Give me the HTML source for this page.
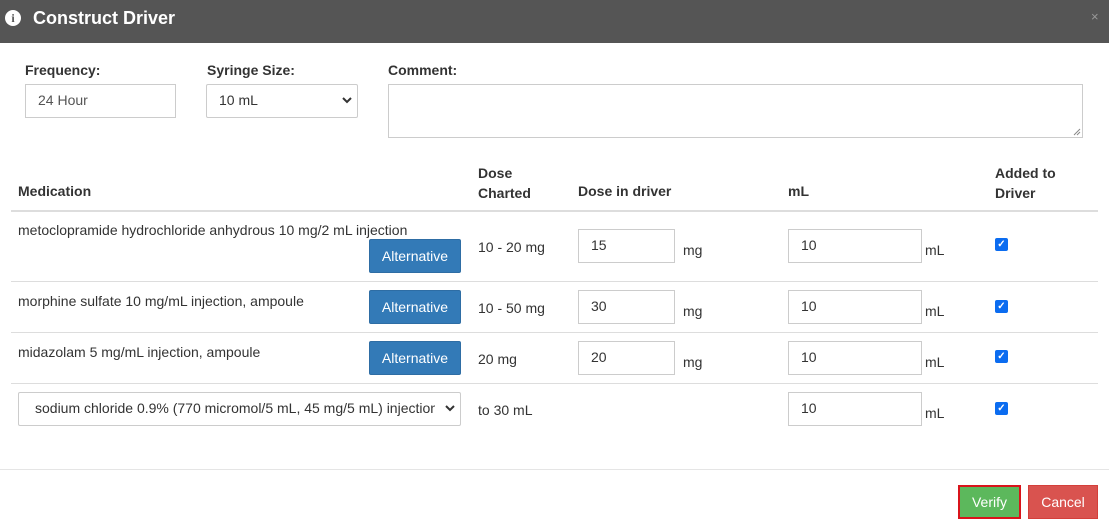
<!DOCTYPE html><html><head><style>
body{margin:0;width:1109px;height:528px;position:relative;font-family:"Liberation Sans",Arial,sans-serif;font-size:14px;color:#333;background:#fff;overflow:hidden}
.a{position:absolute}
.hd{left:0;top:0;width:1109px;height:43px;background:#555}
.b{font-weight:bold}
.inp{position:absolute;border:1px solid #ccc;box-sizing:border-box;background:#fff;padding-left:12px;line-height:30px;font-size:14px;color:#555}
.line{position:absolute;left:11px;width:1087px;height:1px;background:#ddd}
.btn{position:absolute;background:#337ab7;color:#fff;border:1px solid #2e6da4;box-sizing:border-box;text-align:center;line-height:32px;font-size:14px;border-radius:2px}
.cb{position:absolute;width:13px;height:13px;background:#0b6cf0;border-radius:2px;color:#fff;font-size:10px;line-height:13px;text-align:center;font-weight:bold}
.chev{position:absolute;right:5px;top:11px;background:#fff}
</style></head><body>
<div class="a hd"></div>
<div class="a" style="left:5px;top:10px;width:16px;height:16px;border-radius:50%;background:#fff;color:#555;font:bold 12px 'Liberation Serif',serif;text-align:center;line-height:16px">i</div>
<div class="a b" style="left:33px;top:8px;color:#fff;font-size:18px">Construct Driver</div>
<div class="a" style="left:1091px;top:9px;color:#999;font-size:13px">×</div>

<div class="a b" style="left:25px;top:62px">Frequency:</div>
<div class="a b" style="left:207px;top:62px">Syringe Size:</div>
<div class="a b" style="left:388px;top:62px">Comment:</div>
<div class="inp" style="left:25px;top:84px;width:151px;height:34px">24 Hour</div>
<div class="inp" style="left:206px;top:84px;width:152px;height:34px;color:#333;border-radius:2px">10 mL<svg class="chev" width="10" height="8" viewBox="0 0 10 8"><path d="M1 2L5 6L9 2" stroke="#333" stroke-width="2" fill="none"/></svg></div>
<div class="inp" style="left:388px;top:84px;width:695px;height:54px"><svg style="position:absolute;right:1px;bottom:1px" width="8" height="8"><path d="M7 1L1 7M7 4L4 7" stroke="#888"/></svg></div>

<div class="a b" style="left:18px;top:183px">Medication</div>
<div class="a b" style="left:478px;top:163px;line-height:20px">Dose<br>Charted</div>
<div class="a b" style="left:578px;top:183px">Dose in driver</div>
<div class="a b" style="left:788px;top:183px">mL</div>
<div class="a b" style="left:995px;top:163px;line-height:20px">Added to<br>Driver</div>
<div class="line" style="top:210px;height:2px"></div>

<div class="a" style="left:18px;top:222px">metoclopramide hydrochloride anhydrous 10 mg/2 mL injection</div>
<div class="btn" style="left:369px;top:239px;width:92px;height:34px">Alternative</div>
<div class="a" style="left:478px;top:239px">10 - 20 mg</div>
<div class="inp" style="left:578px;top:229px;width:97px;height:34px;color:#333">15</div><div class="a" style="left:683px;top:242px">mg</div>
<div class="inp" style="left:788px;top:229px;width:134px;height:34px;color:#333">10</div><div class="a" style="left:925px;top:242px">mL</div>
<div class="cb" style="left:995px;top:238px">✓</div>
<div class="line" style="top:281px"></div>

<div class="a" style="left:18px;top:293px">morphine sulfate 10 mg/mL injection, ampoule</div>
<div class="btn" style="left:369px;top:290px;width:92px;height:34px">Alternative</div>
<div class="a" style="left:478px;top:300px">10 - 50 mg</div>
<div class="inp" style="left:578px;top:290px;width:97px;height:34px;color:#333">30</div><div class="a" style="left:683px;top:303px">mg</div>
<div class="inp" style="left:788px;top:290px;width:134px;height:34px;color:#333">10</div><div class="a" style="left:925px;top:303px">mL</div>
<div class="cb" style="left:995px;top:300px">✓</div>
<div class="line" style="top:332px"></div>

<div class="a" style="left:18px;top:344px">midazolam 5 mg/mL injection, ampoule</div>
<div class="btn" style="left:369px;top:341px;width:92px;height:34px">Alternative</div>
<div class="a" style="left:478px;top:351px">20 mg</div>
<div class="inp" style="left:578px;top:341px;width:97px;height:34px;color:#333">20</div><div class="a" style="left:683px;top:354px">mg</div>
<div class="inp" style="left:788px;top:341px;width:134px;height:34px;color:#333">10</div><div class="a" style="left:925px;top:354px">mL</div>
<div class="cb" style="left:995px;top:350px">✓</div>
<div class="line" style="top:383px"></div>

<div class="inp" style="left:18px;top:392px;width:443px;height:34px;color:#333;padding-left:16px;white-space:nowrap;overflow:hidden;border-radius:2px"><span style="display:inline-block;width:400px;overflow:hidden">sodium chloride 0.9% (770 micromol/5 mL, 45 mg/5 mL) injection</span><svg class="chev" width="14" height="8" viewBox="0 0 14 8" style="padding-left:4px"><path d="M5 2L9 6L13 2" stroke="#333" stroke-width="2" fill="none"/></svg></div>
<div class="a" style="left:478px;top:402px">to 30 mL</div>
<div class="inp" style="left:788px;top:392px;width:134px;height:34px;color:#333">10</div><div class="a" style="left:925px;top:405px">mL</div>
<div class="cb" style="left:995px;top:402px">✓</div>

<div class="a" style="left:0;top:469px;width:1109px;height:1px;background:#e5e5e5"></div>
<div class="a" style="left:958px;top:485px;width:63px;height:34px;box-sizing:border-box;border:2px solid #d9141b;background:#5cb85c;color:#fff;text-align:center;line-height:30px">Verify</div>
<div class="a" style="left:1028px;top:485px;width:70px;height:34px;box-sizing:border-box;border:1px solid #d43f3a;background:#d9534f;color:#fff;text-align:center;line-height:32px">Cancel</div>
</body></html>
